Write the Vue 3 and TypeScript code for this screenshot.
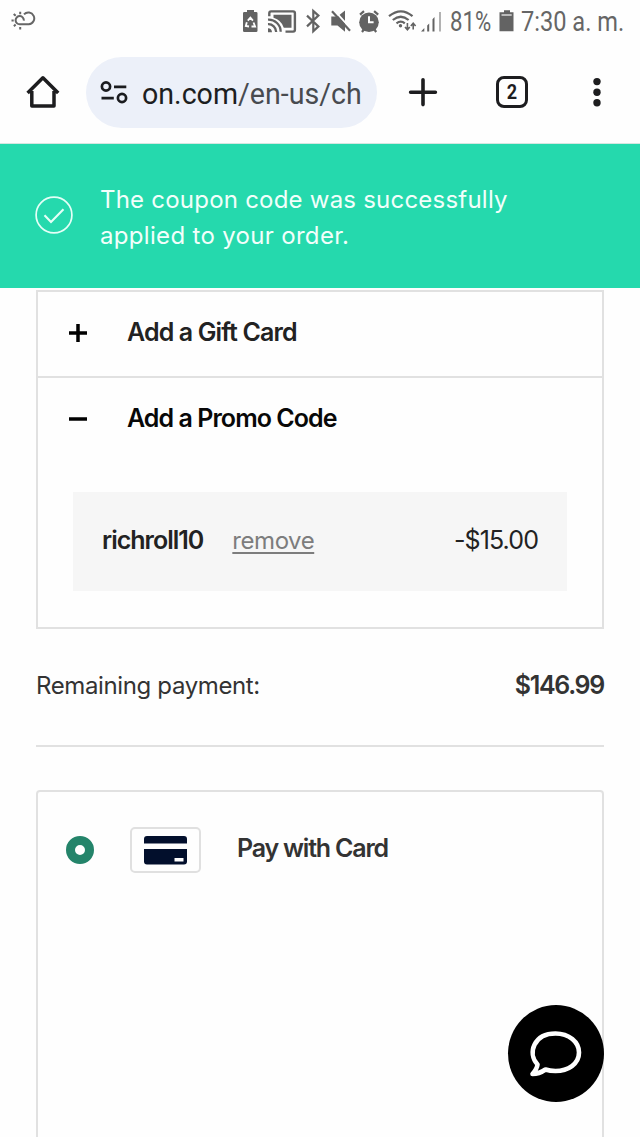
<script setup lang="ts">
import { ref } from 'vue'

const coupon = ref({ code: 'richroll10', amount: '-$15.00' })
const remaining = ref('$146.99')
</script>

<template>
  <div class="screen">
    <header class="status">
      <svg class="weather" width="26" height="22" viewBox="10 10 26 22" fill="none" stroke="#666" stroke-width="2">
        <path d="M23.8 21.6A4.1 4.1 0 1 0 19.8 25.3H28.8A5.9 5.9 0 1 0 24 15.4" />
        <path d="M20.2 12.8v2.4M20.2 28v2.6M11.5 21.4h2.2M13.7 15l2 1.8M13.9 27.2l1.7-1.6" />
      </svg>
      <div class="indicators">
        <svg width="198" height="26" viewBox="243 8 198 26" fill="none" stroke="#636363">
          <path d="M247 10h7v2h2.2q1.300 0 1.300 1.300v17.400q0 1.300-1.300 1.300h-11.900q-1.300 0-1.300-1.300V13.300q0-1.300 1.300-1.300H247z" fill="#636363" stroke="none" />
          <path d="M247.800 20.600l2.600-3 2.500 3M246.800 22.300l-1 3.700 3.200.5M251.500 26.500h3.600l-1.600-4" stroke="#fff" stroke-width="1.800" />
          <path d="M269.300 16.300v-3.100q0-1.800 1.800-1.800h22q1.800 0 1.800 1.800v16.600q0 1.800-1.800 1.800h-7.600" stroke-width="2.400" />
          <path d="M273.500 14.800h18v13h-7.700q-2.400-7.700-10.300-10z" fill="#636363" stroke="none" />
          <path d="M268 19.700a12 12 0 0 1 12.700 12.100M268 24.200a7.800 7.800 0 0 1 8.200 7.700" stroke-width="2.300" />
          <path d="M268 28.300q3.700.2 4 4h-4z" fill="#636363" stroke="none" />
          <path d="M307 15.600l11.400 10.800-5.100 4.800V11l5.100 4.600L307 26.400" stroke-width="2.200" />
          <path d="M331.300 16.600h6.200l7.500-6v21.200l-7.500-6.400h-6.200z" fill="#636363" stroke="none" />
          <path d="M334.300 10.300l17 19" stroke="#fff" stroke-width="2" />
          <path d="M332 11.200l18 19.500" stroke-width="2.200" />
          <circle cx="369" cy="22.200" r="9.800" fill="#636363" stroke="none" />
          <path d="M369 16.300v6h4.600" stroke="#fff" stroke-width="2" />
          <path d="M360 14.700l4-3.500M378.200 14.700l-4.100-3.500M364.200 29l-2.200 3M374 29l2.200 3" stroke-width="2.200" />
          <path d="M389 16.200q12-9.800 23.500 0M392.800 20q8-6.500 15.800 0M396.500 23.300q4.300-3.500 8.300 0" stroke-width="2.200" />
          <circle cx="400.500" cy="25.800" r="1.700" fill="#636363" stroke="none" />
          <path d="M407.400 23v6.300M405 27l2.400 2.700 2.400-2.700M413.200 29.600v-6M410.800 26l2.400-2.700 2.400 2.700" stroke-width="1.600" />
          <path d="M421 31.500l3.300-3.500v3.500zM427.200 31.500v-6l2-2v8zM432.500 31.500V19.300l2-2.300v14.500z" fill="#636363" stroke="none" />
          <path d="M440 31.500V12" stroke="#aaa" stroke-width="1.800" />
        </svg>
        <span class="cond percent">81%</span>
        <svg class="battery" width="16" height="22" viewBox="499 10.500 16 22">
          <path d="M504 10.700h6v2h3.500v19h-14v-19h4.500z" fill="#636363" />
          <path d="M501.500 15.500h10.200" stroke="#bbb" stroke-width="2" />
        </svg>
        <span class="cond clock">7:30 a. m.</span>
      </div>
    </header>

    <nav class="toolbar">
      <svg class="home" width="34" height="34" viewBox="26 76 34 34" fill="none" stroke="#1d1d1f" stroke-width="3.500" stroke-linejoin="round">
        <path d="M31.800 92v15h22.200V92M27.600 94L42.900 78.800 58.200 94" />
      </svg>
      <div class="address">
        <svg width="28" height="24" viewBox="100 80 28 24" fill="none" stroke="#1b1c1f" stroke-width="2.700">
          <circle cx="106" cy="86.500" r="4.100" />
          <circle cx="122" cy="98" r="4.100" />
          <path d="M114 86.800h12.300M101.500 98.200h12.300" />
        </svg>
        <span class="url">on.com<span class="path">/en-us/ch</span></span>
      </div>
      <svg class="plus-tab" width="30" height="30" viewBox="0 0 30 30" stroke="#1d1d1f" stroke-width="3.600" stroke-linecap="round">
        <path d="M15 2.800v24.800M2.600 15.200h24.800" />
      </svg>
      <div class="tabs"><span>2</span></div>
      <svg class="more" width="8" height="30" viewBox="0 0 8 30" fill="#1d1d1f">
        <circle cx="4" cy="4.600" r="3.700" /><circle cx="4" cy="15.200" r="3.700" /><circle cx="4" cy="25.800" r="3.700" />
      </svg>
    </nav>

    <section class="banner">
      <svg width="38" height="38" viewBox="0 0 38 38" fill="none" stroke="#e4fff7">
        <circle cx="19" cy="19" r="17.900" stroke-width="1.700" />
        <path d="M9.500 19.200l6.500 6.700 12.500-12.700" stroke-width="2.100" />
      </svg>
      <p><span class="line one">The coupon code was successfully</span><span class="line two">applied to your order.</span></p>
    </section>

    <main>
      <section class="discounts">
        <div class="option gift">
          <svg width="20" height="20" viewBox="0 0 20 20" stroke="#000" stroke-width="3.500"><path d="M1 10h18M10 1v18" /></svg>
          <h2>Add a Gift Card</h2>
        </div>
        <div class="option promo">
          <svg width="20" height="20" viewBox="0 0 20 20" stroke="#000" stroke-width="3.500"><path d="M1 10h18" /></svg>
          <h2>Add a Promo Code</h2>
        </div>
        <div class="applied">
          <strong class="code">{{ coupon.code }}</strong>
          <a>remove</a>
          <span class="amount">{{ coupon.amount }}</span>
        </div>
      </section>

      <div class="remaining">
        <span class="label">Remaining payment:</span>
        <strong class="total">{{ remaining }}</strong>
      </div>

      <section class="payment">
        <span class="radio"></span>
        <span class="card-icon">
          <svg width="44" height="29" viewBox="0 0 44 29" fill="#020f2c">
            <path d="M3 0h37q3 0 3 3v4.500H0V3q0-3 3-3zM0 13h43v12.500q0 3-3 3H3q-3 0-3-3z" />
            <path d="M30.500 22h9v3.500h-9z" fill="#fff" />
          </svg>
        </span>
        <h2>Pay with Card</h2>
      </section>
    </main>

    <button class="chat" aria-label="Chat">
      <svg width="54" height="48" viewBox="530 1030 54 48" fill="none" stroke="#fff" stroke-width="4.600" stroke-linejoin="round">
        <path d="M538.500 1064.500C528 1053 535 1033.500 556.500 1033.500C570 1033.500 580 1042 580 1052.500C580 1064 569 1071 556.500 1071Q551 1071 546.500 1069.500Q540 1074 533.500 1074Q538 1069 538.500 1064.500Z" />
      </svg>
    </button>
  </div>
</template>

<style>
body { margin: 0; background: #fefefe; }
</style>

<style scoped>
.screen {
  position: relative;
  width: 640px;
  height: 1137px;
  overflow: hidden;
  background: #fefefe;
  font-family: Inter, "Liberation Sans", sans-serif;
  color: #222;
}
.screen * { box-sizing: border-box; }
svg { display: block; flex: none; }
h2, p { margin: 0; }
.status { display: flex; height: 45px; padding-left: 10px; }
.weather { margin-top: 9px; }
.indicators { display: flex; margin-left: 207px; padding-top: 8px; }
.cond {
  font: 400 27px/29px Roboto, sans-serif;
  color: #666;
  white-space: nowrap;
  transform-origin: left center;
}
.percent { width: 42px; margin-left: 9px; transform: scaleX(0.82); }
.battery { margin: 2px 0 0 7px; }
.clock { margin-left: 6px; transform: scaleX(0.874); }
.toolbar {
  display: flex;
  align-items: center;
  height: 99px;
  padding: 0 0 4px 26px;
  border-bottom: 1px solid #d5e6e1;
}
.address {
  display: flex;
  align-items: center;
  width: 291px;
  height: 71px;
  margin-left: 26px;
  padding-left: 14px;
  border-radius: 36px;
  background: #ecf0f9;
}
.url {
  margin-left: 14px;
  padding-top: 3px;
  font: 400 28.600px/36px Roboto, sans-serif;
  color: #1d1e21;
  white-space: nowrap;
}
.path { color: #484b50; }
.plus-tab { margin-left: 31px; }
.tabs {
  display: flex;
  justify-content: center;
  width: 32px;
  height: 32px;
  margin-left: 58px;
  border: 3.500px solid #1d1d1f;
  border-radius: 8px;
  font: 700 21px/27px Roboto, sans-serif;
  color: #1d1d1f;
}
.tabs span { transform: scaleX(0.86); }
.more { margin-left: 65px; }
.banner {
  display: flex;
  height: 144px;
  padding: 52px 0 0 35px;
  background: #25d9ad;
  color: #f2fffb;
}
.banner p { margin: -14px 0 0 27px; font-size: 24px; line-height: 36px; }
.line { display: block; white-space: nowrap; }
.one { letter-spacing: 0.22px; }
.two { letter-spacing: 0.32px; }
main { padding: 2px 36px 0; }
.discounts { height: 339px; border: 2px solid #e1e1e1; }
.option { display: flex; align-items: center; height: 85px; padding-left: 30px; }
.option h2 { margin: -2px 0 0 39px; letter-spacing: -0.88px; }
.gift { height: 86px; padding-bottom: 3px; border-bottom: 2px solid #e1e1e1; }
.promo { height: 84px; padding-bottom: 2px; }
h2, strong { font-size: 25px; font-weight: 600; line-height: 32px; white-space: nowrap; }
.promo h2 { color: #080808; letter-spacing: -0.95px; }
.applied {
  display: flex;
  align-items: center;
  height: 99px;
  margin: 30px 35px 0;
  padding: 0 29px 3px 28px;
  background: #f6f6f6;
}
.code { margin-left: 1px; letter-spacing: -1px; }
.applied a {
  margin-left: 29px;
  font-size: 24px;
  letter-spacing: -0.45px;
  color: #7d7d7d;
  text-decoration: underline;
  text-decoration-thickness: 2px;
  text-underline-offset: 3px;
}
.amount { margin-left: auto; font-size: 25px; letter-spacing: -0.9px; }
.remaining {
  display: flex;
  align-items: center;
  justify-content: space-between;
  height: 118px;
  padding-bottom: 4px;
  border-bottom: 2px solid #e1e1e1;
  color: #333;
}
.label { font-size: 24px; letter-spacing: -0.37px; }
.total { letter-spacing: -1.3px; }
.payment {
  display: flex;
  align-items: flex-start;
  height: 400px;
  margin-top: 43px;
  padding: 35px 0 0 28px;
  border: 2px solid #e1e1e1;
  border-radius: 4px;
  color: #333;
}
.radio { width: 28px; height: 28px; margin-top: 9px; border: 9px solid #24846a; border-radius: 50%; }
.card-icon {
  display: flex;
  align-items: center;
  justify-content: center;
  width: 71px;
  height: 46px;
  margin-left: 36px;
  border: 2px solid #e0e0e0;
  border-radius: 5px;
}
.payment h2 { margin: 5px 0 0 36px; letter-spacing: -1.2px; }
.chat {
  position: absolute;
  left: 508px;
  top: 1005px;
  display: flex;
  align-items: center;
  justify-content: center;
  width: 96px;
  height: 97px;
  padding: 0;
  border: 0;
  border-radius: 50%;
  background: #000;
}
</style>
